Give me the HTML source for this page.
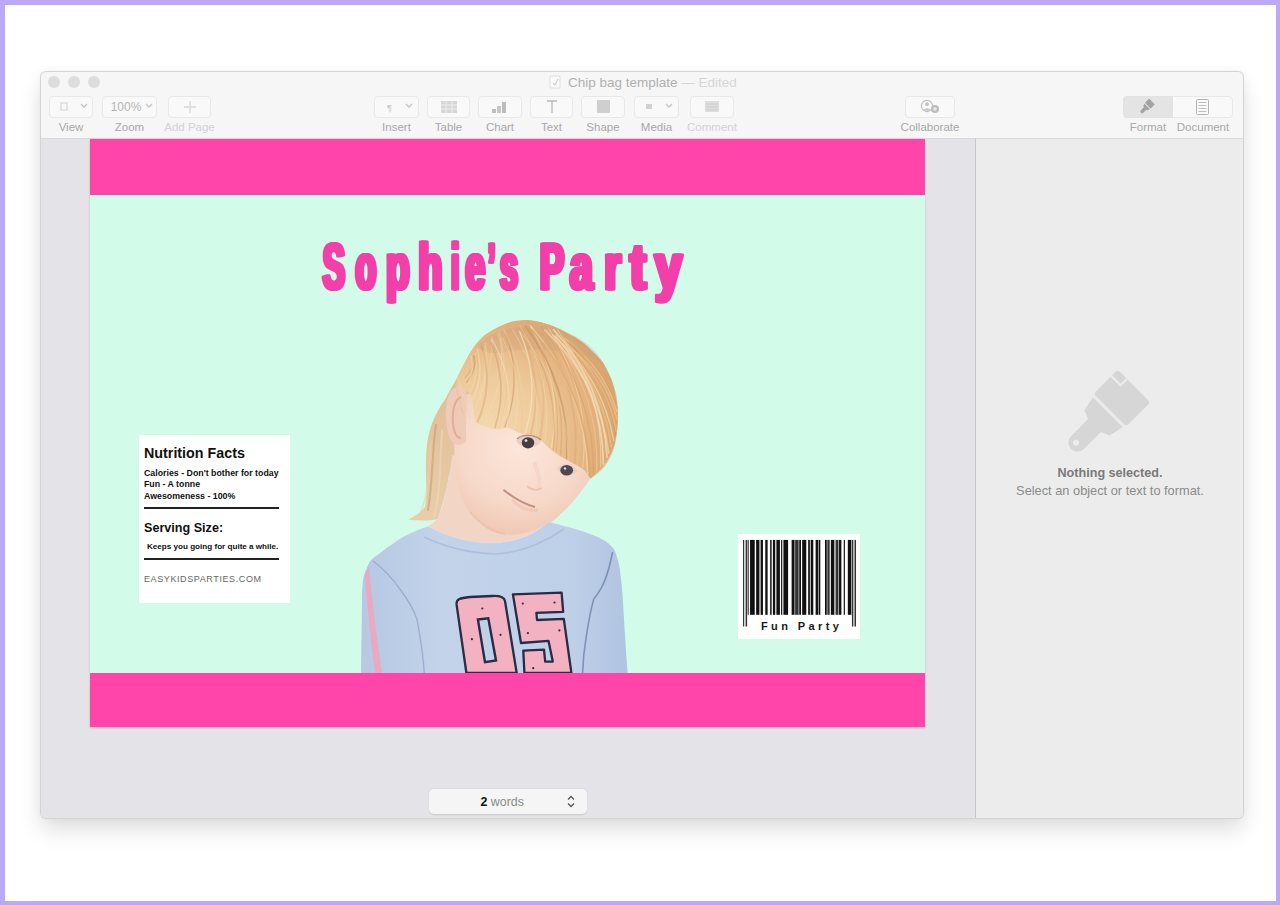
<!DOCTYPE html>
<html><head><meta charset="utf-8">
<style>
*{margin:0;padding:0;box-sizing:border-box}
html,body{width:1280px;height:905px;overflow:hidden;background:#fff;font-family:"Liberation Sans",sans-serif}
.a{position:absolute}
#frame{left:0;top:0;width:1280px;height:905px;border-style:solid;border-color:#BBA8F6;border-width:5px 4px 4px 5px;background:#fff}
#win{left:41px;top:72px;width:1202px;height:746px;border-radius:5px;background:#F6F6F6;box-shadow:0 0 0 1px #d4d4d4,0 12px 22px rgba(0,0,0,.13),0 0 10px rgba(0,0,0,.05);overflow:hidden}
.tl{top:76px;width:12px;height:12px;border-radius:50%;background:#dddddd}
.btn{top:96px;height:22px;border:1px solid #e8e8e8;border-radius:4px;background:#f9f9f9}
.lbl{top:120px;font-size:11.5px;line-height:14px;color:#a8a8a8;text-align:center;white-space:nowrap}
#canvas{left:41px;top:138px;width:934px;height:680px;border-radius:0 0 0 5px;background:#E3E3E8;border-top:1px solid #dadada}
#side{left:975px;top:138px;width:268px;height:680px;border-radius:0 0 5px 0;background:#ECECEC;border-left:1px solid #c8c8c8;border-top:1px solid #dadada}
#page{left:90px;top:139px;width:835px;height:588px;background:#D3FBE9;box-shadow:0 1px 2px rgba(0,0,0,.18)}
.band{left:90px;width:835px;background:#FF45A9}
.nf{color:#111;font-weight:bold;white-space:nowrap}
</style></head><body>
<div id="frame" class="a"></div>
<div id="win" class="a"></div>
<!-- traffic lights -->
<div class="a tl" style="left:48px"></div>
<div class="a tl" style="left:68px"></div>
<div class="a tl" style="left:88px"></div>
<!-- title -->
<svg class="a" style="left:549px;top:75px" width="13" height="14" viewBox="0 0 13 14"><rect x="1" y="1" width="10" height="12" rx="1" fill="#fafafa" stroke="#dedede"/><path d="M4 8 L6 10 L9 4" stroke="#cfcfcf" stroke-width="1.2" fill="none"/></svg>
<div class="a" style="left:568px;top:75px;font-size:13.5px;line-height:16px;color:#b0b0b0;white-space:nowrap">Chip bag template <span style="color:#d6d6d6">— Edited</span></div>

<!-- toolbar buttons -->
<div class="a btn" style="left:49px;width:44px"></div>
<div class="a btn" style="left:102px;width:55px"></div>
<div class="a btn" style="left:168px;width:43px"></div>
<div class="a lbl" style="left:49px;width:44px">View</div>
<div class="a lbl" style="left:102px;width:55px">Zoom</div>
<div class="a lbl" style="left:158px;width:63px;color:#d2d2d2">Add Page</div>

<div class="a btn" style="left:374px;width:45px"></div>
<div class="a btn" style="left:427px;width:43px"></div>
<div class="a btn" style="left:478px;width:44px"></div>
<div class="a btn" style="left:530px;width:43px"></div>
<div class="a btn" style="left:581px;width:44px"></div>
<div class="a btn" style="left:634px;width:45px"></div>
<div class="a btn" style="left:690px;width:44px"></div>
<div class="a lbl" style="left:374px;width:45px">Insert</div>
<div class="a lbl" style="left:427px;width:43px">Table</div>
<div class="a lbl" style="left:478px;width:44px">Chart</div>
<div class="a lbl" style="left:530px;width:43px">Text</div>
<div class="a lbl" style="left:581px;width:44px">Shape</div>
<div class="a lbl" style="left:634px;width:45px">Media</div>
<div class="a lbl" style="left:680px;width:64px;color:#d2d2d2">Comment</div>

<div class="a btn" style="left:905px;width:50px"></div>
<div class="a lbl" style="left:890px;width:80px">Collaborate</div>

<div class="a btn" style="left:1123px;width:110px"></div>
<div class="a btn" style="left:1123px;width:50px;background:#e4e4e4;border-color:#e2e2e2;border-radius:4px 0 0 4px"></div>
<div class="a lbl" style="left:1123px;width:50px">Format</div>
<div class="a lbl" style="left:1173px;width:60px">Document</div>

<!-- toolbar icons -->
<svg class="a" style="left:0;top:0" width="1280" height="140" viewBox="0 0 1280 140">
  <g fill="none" stroke="#c4c4c4" stroke-width="1.3">
    <path d="M81 104 l3 3 l3 -3"/><path d="M146 104 l3 3 l3 -3"/>
    <path d="M406 104 l3 3 l3 -3"/><path d="M666 104 l3 3 l3 -3"/>
    <path d="M190 101 v12 M184 107 h12" stroke="#d8d8d8"/>
    <path d="M547 101 h10 M552 101 v12" stroke="#b8b8b8"/>
  </g>
  <rect x="61" y="103" width="6" height="7" fill="none" stroke="#cfcfcf"/>
  <text x="126" y="111" font-size="12" fill="#b5b5b5" text-anchor="middle" font-family="Liberation Sans">100%</text>
  <text x="387" y="111" font-size="9" fill="#c0c0c0" font-family="Liberation Sans">¶</text>
  <rect x="441" y="101" width="16" height="12" fill="#d6d6d6"/>
  <path d="M441 105 h16 M441 109 h16 M446 101 v12 M452 101 v12" stroke="#eeeeee" stroke-width="1"/>
  <rect x="492" y="109" width="4" height="4" fill="#bdbdbd"/><rect x="497" y="106" width="4" height="7" fill="#c6c6c6"/><rect x="502" y="102" width="4" height="11" fill="#bdbdbd"/>
  <rect x="597" y="100" width="13" height="13" fill="#cfcfcf"/>
  <rect x="646" y="104" width="6" height="5" fill="#d2d2d2"/>
  <rect x="705" y="101" width="14" height="11" fill="#dedede"/><path d="M706 104 h12 M706 107 h12 M706 110 h12" stroke="#cccccc"/>
  <circle cx="927" cy="106" r="5.6" fill="none" stroke="#bdbdbd" stroke-width="1.1"/><circle cx="927" cy="104.2" r="1.9" fill="#c2c2c2"/><path d="M923.8 110.5 C924 107.5 930 107.5 930.2 110.5 Z" fill="#c2c2c2"/>
  <circle cx="935" cy="109" r="4" fill="#bdbdbd"/><path d="M935 107 v4 M933 109 h4" stroke="#f5f5f5" stroke-width="1"/>
  <g transform="translate(1152,101.5) rotate(45) scale(0.175)" fill="#a3a3a3">
    <path d="M-23 3 Q-23 0 -20 0 L20 0 Q23 0 23 3 L23 31 Q23 34 20 34 L-20 34 Q-23 34 -23 31 Z"/>
    <path d="M-21 40 L21 40 L18 52 L10 56 L10 80 A10 10 0 0 1 -10 80 L-10 56 L-18 52 Z"/>
  </g>
  <rect x="1196.5" y="99.5" width="12" height="15" rx="1" fill="none" stroke="#b3b3b3" stroke-width="1"/>
  <path d="M1198.5 102.5 h8 M1198.5 105.5 h8 M1198.5 108.5 h8 M1198.5 111.5 h8" stroke="#c0c0c0" stroke-width="1"/>
</svg>

<div id="canvas" class="a"></div>
<div id="side" class="a"></div>
<div id="page" class="a"></div>
<div class="a band" style="top:139px;height:56px"></div>
<div class="a band" style="top:673px;height:54px"></div>

<!-- title text -->
<svg class="a" style="left:0;top:200px" width="1280" height="120" viewBox="0 200 1280 120"><g font-family="Liberation Sans" font-weight="bold" font-size="64.5" fill="#F23FA9" stroke="#F23FA9" stroke-width="3" stroke-linejoin="round"><text transform="translate(321.47,0) scale(0.511,1)" x="0" y="289">S</text><text transform="translate(322.87,0) scale(0.511,1)" x="0" y="289">S</text><text transform="translate(324.27,0) scale(0.511,1)" x="0" y="289">S</text><text transform="translate(354.37,0) scale(0.514,1)" x="0" y="289">o</text><text transform="translate(355.77,0) scale(0.514,1)" x="0" y="289">o</text><text transform="translate(357.17,0) scale(0.514,1)" x="0" y="289">o</text><text transform="translate(384.79,0) scale(0.592,1)" x="0" y="289">p</text><text transform="translate(386.19,0) scale(0.592,1)" x="0" y="289">p</text><text transform="translate(387.59,0) scale(0.592,1)" x="0" y="289">p</text><text transform="translate(416.91,0) scale(0.608,1)" x="0" y="289">h</text><text transform="translate(418.31,0) scale(0.608,1)" x="0" y="289">h</text><text transform="translate(419.71,0) scale(0.608,1)" x="0" y="289">h</text><text transform="translate(450.12,0) scale(0.416,1)" x="0" y="289">i</text><text transform="translate(451.52,0) scale(0.416,1)" x="0" y="289">i</text><text transform="translate(452.92,0) scale(0.416,1)" x="0" y="289">i</text><text transform="translate(464.31,0) scale(0.540,1)" x="0" y="289">e</text><text transform="translate(465.71,0) scale(0.540,1)" x="0" y="289">e</text><text transform="translate(467.11,0) scale(0.540,1)" x="0" y="289">e</text><text transform="translate(487.05,0) scale(0.368,1)" x="0" y="289">’</text><text transform="translate(488.45,0) scale(0.368,1)" x="0" y="289">’</text><text transform="translate(489.85,0) scale(0.368,1)" x="0" y="289">’</text><text transform="translate(498.74,0) scale(0.494,1)" x="0" y="289">s</text><text transform="translate(500.14,0) scale(0.494,1)" x="0" y="289">s</text><text transform="translate(501.54,0) scale(0.494,1)" x="0" y="289">s</text><text transform="translate(538.44,0) scale(0.561,1)" x="0" y="289">P</text><text transform="translate(539.84,0) scale(0.561,1)" x="0" y="289">P</text><text transform="translate(541.24,0) scale(0.561,1)" x="0" y="289">P</text><text transform="translate(568.46,0) scale(0.639,1)" x="0" y="289">a</text><text transform="translate(569.86,0) scale(0.639,1)" x="0" y="289">a</text><text transform="translate(571.26,0) scale(0.639,1)" x="0" y="289">a</text><text transform="translate(602.99,0) scale(0.658,1)" x="0" y="289">r</text><text transform="translate(604.39,0) scale(0.658,1)" x="0" y="289">r</text><text transform="translate(605.79,0) scale(0.658,1)" x="0" y="289">r</text><text transform="translate(628.43,0) scale(0.751,1)" x="0" y="289">t</text><text transform="translate(629.83,0) scale(0.751,1)" x="0" y="289">t</text><text transform="translate(631.23,0) scale(0.751,1)" x="0" y="289">t</text><text transform="translate(653.62,0) scale(0.748,1)" x="0" y="289">y</text><text transform="translate(655.02,0) scale(0.748,1)" x="0" y="289">y</text><text transform="translate(656.42,0) scale(0.748,1)" x="0" y="289">y</text></g></svg>

<!-- photo -->
<svg class="a" style="left:0;top:0" width="1280" height="673" viewBox="0 0 1280 673">
  <defs>
    <radialGradient id="skin" cx="0.45" cy="0.4" r="0.7">
      <stop offset="0" stop-color="#FCE6DA"/><stop offset="0.55" stop-color="#F7D9CA"/><stop offset="0.9" stop-color="#EFC6B2"/><stop offset="1" stop-color="#E8B9A3"/>
    </radialGradient>
    <linearGradient id="backhair" x1="0" y1="0" x2="0" y2="1">
      <stop offset="0" stop-color="#DCB68F"/><stop offset="1" stop-color="#E9CDA9"/>
    </linearGradient>
    <radialGradient id="bangg" cx="490" cy="430" r="150" gradientUnits="userSpaceOnUse">
      <stop offset="0" stop-color="#F4D9B0"/><stop offset="0.35" stop-color="#EECB9C"/><stop offset="0.62" stop-color="#E5B683"/><stop offset="0.85" stop-color="#D9A570"/><stop offset="1" stop-color="#CDA07C"/>
    </radialGradient>
    <linearGradient id="shirtg" x1="0" y1="0" x2="1" y2="0">
      <stop offset="0" stop-color="#B6C8E2"/><stop offset="0.3" stop-color="#C2D3EA"/><stop offset="0.8" stop-color="#BED0E8"/><stop offset="1" stop-color="#B0C3E0"/>
    </linearGradient>
  </defs>
  <!-- hair mass behind -->
  <path d="M527 320 C556 322 586 343 603 362 C612 378 617 392 617.5 404 C619 425 617 445 610 458 C605 468 598 474 590.6 478.5 L470 480 L449 475 C447 490 442 505 438 519 C430 521 418 521 408 519.5 C416 516 421 512 425 507 C428 495 424.5 475 426.5 450 C428 428 436 412 446 398 C450 390 454 383 456 380 C462 368 468 355 476 344 C486 333 500 323 527 320 Z" fill="url(#backhair)"/>
  <g fill="none" stroke-linecap="round">
    <path d="M436 425 C432 450 433 480 428 510" stroke="#C99D72" stroke-width="2" opacity="0.6"/>
    <path d="M442 430 C440 460 441 490 434 517" stroke="#EED6B6" stroke-width="2" opacity="0.7"/>
    <path d="M431 440 C428 470 430 495 418 518" stroke="#E9CFAE" stroke-width="1.5" opacity="0.6"/>
  </g>
  <!-- neck -->
  <path d="M438 519 C444 502 449 482 452 455 L530 480 L560 515 C545 530 520 542 490 543 C468 543 446 536 428 526.4 Z" fill="#F3D5C6"/>
  <!-- shirt -->
  <path d="M361 673 L362 601 C362 585 363 576 366 570 C369 562 372 558 377 555.6 C383 551 387 547 391.5 544.7 C398 540 404 536 409.7 533.7 C415 531 420 529 428 526.4 C446 536 468 543 490 543 C518 543 538 532 548.8 521.9 C558 524 568 527 577 529.4 C588 533 597 536 605 540.7 C610 544 612 547 614.5 550 C617 556 619 563 620 570.7 C622 585 623 600 623.9 617.6 C625 635 626 652 627.6 673 Z" fill="url(#shirtg)"/>
  <!-- collar seam -->
  <path d="M424 537 C445 547 470 553 495 554 C520 553 545 542 564 529" stroke="#ADBFDC" stroke-width="1.6" fill="none"/>
  <!-- arm creases -->
  <path d="M373 561 C385 570 395 582 400.6 590 C408 600 414 610 417 619.4 C420 635 423 655 424.3 673" stroke="#93A6C8" stroke-width="1.4" fill="none" opacity="0.8"/>
  <path d="M612.6 552 C610 565 607 575 605 580 C601 590 597 595 593.8 598.9 C590 612 588 625 586.3 636.4 C584 650 583 660 582.6 673" stroke="#6F82A8" stroke-width="1.6" fill="none" opacity="0.8"/>
  <!-- pink stripe -->
  <path d="M365 575 L369 566 C372 600 377 640 382 673 L375 673 C371 640 367 608 365 575 Z" fill="#E9A9C0"/>
  <!-- number 0 -->
  <path d="M456.6 604.7 C456 599 460 598 470 597 L492 596 C500 595.5 504 597 505 601 L516.7 673 L466.4 673 Z" fill="#F2B2C2" stroke="#2A2B45" stroke-width="2.3"/>
  <path d="M477.9 619.5 L488.3 618.4 L496 660.5 L485 662.1 Z" fill="#BFD1E9" stroke="#2A2B45" stroke-width="2.4"/>
  <!-- number 5 -->
  <path d="M512.9 594.3 L561.6 592.7 L563.2 611.8 L536.4 612.9 L537 620 L563.8 618.9 L571.4 673 L524.4 673 L523.3 650.6 L544 649.6 L545.2 661.6 L552.8 661.6 L548.5 640.8 L521 643 Z" fill="#F2B2C2" stroke="#2A2B45" stroke-width="2.3" stroke-linejoin="round"/>
  <g fill="#3A2A35"><circle cx="482.3" cy="608.5" r="1.1"/><circle cx="471.9" cy="639.2" r="1.1"/><circle cx="500.5" cy="634.8" r="1.1"/><circle cx="522.8" cy="603.6" r="1.1"/><circle cx="554.5" cy="602.5" r="1.1"/><circle cx="527.9" cy="633.1" r="1.1"/><circle cx="559.4" cy="630.4" r="1.1"/><circle cx="533.2" cy="668.2" r="1.1"/></g>
  <!-- face -->
  <path d="M452 400 C475 388 520 385 560 395 C595 410 612 440 600 462 L590.6 478.5 C582 490 574 502 563 512 C552 522 540 529 525 533 C515 535 508 535 502.8 534.3 C494 532 490 530 486.2 527.6 C478 521 473 517 469.6 512.7 C465 505 461 498 459.7 491.2 C457 480 455 470 454.7 460 C454.5 450 454 440 452 400 Z" fill="url(#skin)"/>
  <path d="M470 512 C480 524 492 532 505 534" stroke="#E6BCA8" stroke-width="2" fill="none" opacity="0.5"/>
  
  <!-- ear -->
  <path d="M466 386 C458 383 450 388 447 400 C444 414 446 432 452 442 C456 446 462 445 466 442 C466 425 467 405 466 386 Z" fill="#EFCBB7"/>
  <path d="M461 397 C454 400 452 412 453 424 C454 433 457 438 461 438" stroke="#DFAE96" stroke-width="2" fill="none"/>
  <!-- hair top + bangs -->
  <path d="M471 394 C473 405 474 415 475.3 422.2 C478 424 481 425.5 485 426.4 C490 428 493 429.5 496.4 429.2 C501 429 505 427.5 509 427.8 C513 429 516 432 520.3 433.4 C525 435 530 435 534.4 436.3 C539 438 542 441.5 545.6 444.7 C549 448 552 450.5 555.5 453.1 C560 456.5 565 459 569.5 461.6 C574 464 578 466 582.2 468.6 C585.5 471 588 475 590.6 478.5 C596 474 601 469 604.7 464.4 C611 455 615 446 616 436.3 C618 426 618 416 617.4 408.1 C616 398 614.5 389 611.7 380 C608 372 605 366 601.9 361.6 C592 350 582 340 570.6 335 C558 327 545 322 527 320 C518 320 512 321 505 324 C497 327 491 331 484.7 335 C479 340 474 346 470.6 352 C467 358 464 364 461.25 369.4 C459 374 457 380 456 385 C461 388 466 391 471 394 Z" fill="url(#bangg)"/>
  <g fill="none" stroke-linecap="round">
    <path d="M476 346 C495 326 540 318 575 336 C590 345 598 352 602 362 C580 352 540 345 505 352 C492 355 482 352 476 346 Z" fill="#C69F80" opacity="0.28" stroke="none"/>
    <path d="M475.1 358.0 Q471.7 368.1 462.7 372.3" stroke="#EDC591" stroke-width="1.7" opacity="0.44"/>
    <path d="M473.6 355.2 Q473.7 368.9 465.1 378.0" stroke="#CD945F" stroke-width="1.1" opacity="0.39"/>
    <path d="M475.1 355.9 Q476.0 371.4 466.9 382.4" stroke="#CD945F" stroke-width="1.5" opacity="0.63"/>
    <path d="M471.2 356.5 Q474.6 371.7 467.6 384.2" stroke="#F2D4A6" stroke-width="1.8" opacity="0.62"/>
    <path d="M475.1 353.4 Q479.8 373.8 470.4 391.0" stroke="#F2D4A6" stroke-width="1.5" opacity="0.57"/>
    <path d="M476.6 355.9 Q481.3 377.2 471.4 395.0" stroke="#E3B37E" stroke-width="0.8" opacity="0.46"/>
    <path d="M477.5 349.7 Q484.2 376.6 472.2 400.1" stroke="#F5DCB3" stroke-width="1.2" opacity="0.73"/>
    <path d="M491.6 336.9 Q494.3 374.2 472.6 403.2" stroke="#F2D4A6" stroke-width="1.8" opacity="0.37"/>
    <path d="M485.4 343.4 Q491.2 378.5 473.3 407.8" stroke="#F2D4A6" stroke-width="1.6" opacity="0.47"/>
    <path d="M483.5 350.9 Q489.8 383.5 473.9 411.2" stroke="#F5DCB3" stroke-width="0.9" opacity="0.67"/>
    <path d="M484.0 346.3 Q492.0 383.4 474.5 415.6" stroke="#F2D4A6" stroke-width="1.2" opacity="0.44"/>
    <path d="M481.8 345.5 Q493.7 385.1 477.7 421.7" stroke="#CD945F" stroke-width="1.9" opacity="0.35"/>
    <path d="M500.4 339.3 Q506.9 385.5 482.5 423.8" stroke="#F5DCB3" stroke-width="1.0" opacity="0.53"/>
    <path d="M492.0 342.2 Q504.7 385.5 486.9 425.4" stroke="#F2D4A6" stroke-width="1.2" opacity="0.35"/>
    <path d="M499.2 331.9 Q512.1 381.4 490.5 426.2" stroke="#F2D4A6" stroke-width="1.4" opacity="0.46"/>
    <path d="M491.4 343.4 Q508.6 385.5 495.0 427.4" stroke="#CD945F" stroke-width="1.7" opacity="0.41"/>
    <path d="M497.6 333.7 Q515.3 381.1 498.7 427.4" stroke="#EDC591" stroke-width="1.0" opacity="0.44"/>
    <path d="M506.5 335.2 Q522.5 382.0 504.9 426.8" stroke="#CD945F" stroke-width="1.4" opacity="0.54"/>
    <path d="M491.8 339.1 Q515.4 380.8 506.9 426.5" stroke="#F7E2BE" stroke-width="1.2" opacity="0.54"/>
    <path d="M502.3 337.5 Q525.0 381.8 514.4 429.0" stroke="#F5DCB3" stroke-width="0.9" opacity="0.57"/>
    <path d="M503.8 329.6 Q529.2 378.4 517.6 430.6" stroke="#F2D4A6" stroke-width="1.6" opacity="0.38"/>
    <path d="M497.0 333.7 Q527.0 379.3 521.0 432.0" stroke="#EDC591" stroke-width="1.4" opacity="0.41"/>
    <path d="M519.6 331.3 Q541.0 381.8 525.4 432.9" stroke="#F7E2BE" stroke-width="1.3" opacity="0.78"/>
    <path d="M519.8 328.3 Q544.7 380.0 530.9 434.1" stroke="#D9A26B" stroke-width="1.9" opacity="0.36"/>
    <path d="M512.7 329.6 Q543.4 379.2 535.5 435.6" stroke="#F5DCB3" stroke-width="0.8" opacity="0.60"/>
    <path d="M525.2 330.4 Q552.2 382.7 539.6 438.7" stroke="#E3B37E" stroke-width="1.9" opacity="0.50"/>
    <path d="M511.6 333.4 Q545.8 382.1 541.2 439.9" stroke="#E3B37E" stroke-width="0.7" opacity="0.57"/>
    <path d="M520.0 325.4 Q553.7 380.3 544.7 442.5" stroke="#F5DCB3" stroke-width="0.8" opacity="0.64"/>
    <path d="M531.3 327.4 Q563.4 384.9 551.5 448.2" stroke="#F7E2BE" stroke-width="1.5" opacity="0.56"/>
    <path d="M522.8 329.1 Q560.1 384.7 553.4 449.8" stroke="#D9A26B" stroke-width="1.4" opacity="0.57"/>
    <path d="M528.2 328.9 Q564.7 386.2 556.3 452.1" stroke="#CD945F" stroke-width="1.0" opacity="0.36"/>
    <path d="M528.1 325.7 Q567.8 385.1 560.6 454.7" stroke="#D9A26B" stroke-width="1.5" opacity="0.55"/>
    <path d="M525.4 326.2 Q570.1 385.6 566.7 458.4" stroke="#CD945F" stroke-width="1.7" opacity="0.69"/>
    <path d="M520.7 332.4 Q567.6 388.1 568.2 459.3" stroke="#F2D4A6" stroke-width="0.9" opacity="0.57"/>
    <path d="M542.5 333.7 Q582.1 393.3 574.7 463.0" stroke="#D9A26B" stroke-width="1.7" opacity="0.40"/>
    <path d="M546.5 329.7 Q586.5 392.3 577.5 464.5" stroke="#EDC591" stroke-width="1.3" opacity="0.49"/>
    <path d="M548.4 327.9 Q591.0 392.4 582.8 467.8" stroke="#F5DCB3" stroke-width="1.0" opacity="0.62"/>
    <path d="M532.3 330.0 Q584.4 391.6 585.4 470.8" stroke="#EDC591" stroke-width="0.7" opacity="0.41"/>
    <path d="M530.5 326.0 Q586.0 390.3 587.8 473.7" stroke="#F2D4A6" stroke-width="1.7" opacity="0.79"/>
    <path d="M532.2 329.8 Q587.7 393.3 589.9 476.2" stroke="#D9A26B" stroke-width="1.9" opacity="0.66"/>
    <path d="M541.3 326.5 Q594.2 391.7 593.4 474.2" stroke="#CD945F" stroke-width="1.3" opacity="0.37"/>
    <path d="M553.1 335.6 Q599.6 396.0 596.8 470.8" stroke="#EDC591" stroke-width="1.4" opacity="0.69"/>
    <path d="M557.6 330.1 Q604.1 391.5 600.7 466.9" stroke="#F7E2BE" stroke-width="1.2" opacity="0.55"/>
    <path d="M555.8 335.8 Q603.0 392.2 603.4 464.2" stroke="#F7E2BE" stroke-width="1.8" opacity="0.71"/>
    <path d="M553.5 329.6 Q603.5 384.6 607.0 457.3" stroke="#F7E2BE" stroke-width="1.7" opacity="0.71"/>
    <path d="M544.7 330.1 Q599.1 380.8 608.7 453.0" stroke="#F5DCB3" stroke-width="1.9" opacity="0.59"/>
    <path d="M555.4 334.9 Q603.6 382.9 610.2 449.2" stroke="#D9A26B" stroke-width="1.3" opacity="0.37"/>
    <path d="M554.8 337.3 Q603.0 382.5 611.3 446.6" stroke="#F2D4A6" stroke-width="1.7" opacity="0.38"/>
    <path d="M552.4 334.6 Q602.4 377.2 613.7 440.4" stroke="#F2D4A6" stroke-width="1.3" opacity="0.80"/>
    <path d="M563.8 337.3 Q607.7 377.9 615.7 435.6" stroke="#CD945F" stroke-width="1.4" opacity="0.66"/>
    <path d="M563.0 340.4 Q606.3 377.2 616.2 431.6" stroke="#EDC591" stroke-width="1.5" opacity="0.59"/>
    <path d="M566.0 339.4 Q607.2 374.7 616.4 426.5" stroke="#E3B37E" stroke-width="1.7" opacity="0.62"/>
    <path d="M559.3 333.8 Q604.5 369.4 616.5 424.1" stroke="#CD945F" stroke-width="0.9" opacity="0.59"/>
    <path d="M568.4 346.5 Q605.8 374.6 616.8 418.6" stroke="#EDC591" stroke-width="1.8" opacity="0.59"/>
    <path d="M560.9 335.5 Q603.0 364.3 617.1 411.8" stroke="#EDC591" stroke-width="1.3" opacity="0.76"/>
    <path d="M569.4 342.6 Q605.4 367.4 617.3 407.9" stroke="#D9A26B" stroke-width="1.2" opacity="0.72"/>
    <path d="M458 378 C462 392 466 405 470 418" stroke="#EFD3AD" stroke-width="1.5" opacity="0.7"/>
    <path d="M455 384 C458 395 461 405 463 414" stroke="#E5C197" stroke-width="1.2" opacity="0.6"/>
  </g>
  <!-- eyes -->
  <path d="M516 441 C521 433 535 433 541 442 C536 449 522 450 516 441 Z" fill="#E9CFC6"/>
  <ellipse cx="528" cy="442.8" rx="6.3" ry="5.6" fill="#4A3D42"/><path d="M517 439 C522 434 534 434 541 440" stroke="#9A6E60" stroke-width="1.3" fill="none" opacity="0.7"/>
  <circle cx="526" cy="440.6" r="1.4" fill="#EDE4E2"/>
  <path d="M557 468 C562 462 573 463 578 471 C573 477 562 477 557 468 Z" fill="#E9CFC6"/>
  <ellipse cx="566.7" cy="470.2" rx="6.4" ry="5.2" fill="#4F4A52"/><circle cx="565" cy="468.5" r="1.2" fill="#E6DCDC"/>
  <!-- nose shading -->
  <path d="M534 462 C538 472 541 481 538 488" stroke="#EFCDBD" stroke-width="4" fill="none" opacity="0.45"/>
  <path d="M527 486 C531 490 537 491 542 488" stroke="#E2B09C" stroke-width="2" fill="none" opacity="0.6"/>
  <!-- mouth -->
  <path d="M503.4 489.7 C510 495 520 503 535 507" stroke="#C98E82" stroke-width="2" fill="none"/>
  <path d="M512 500 C520 508 530 511 538 510" stroke="#EDB9AC" stroke-width="3" fill="none" opacity="0.5"/>
</svg>

<!-- nutrition box -->
<div class="a" style="left:139px;top:435px;width:151px;height:168px;background:#fff"></div>
<div class="a nf" style="left:144px;top:445px;font-size:14.3px;line-height:17px">Nutrition Facts</div>
<div class="a nf" style="left:144px;top:467.5px;font-size:8.8px;line-height:11.7px">Calories - Don't bother for today<br>Fun - A tonne<br>Awesomeness - 100%</div>
<div class="a" style="left:144px;top:507px;width:135px;height:2px;background:#222"></div>
<div class="a nf" style="left:144px;top:520px;font-size:12.6px;line-height:16px">Serving Size:</div>
<div class="a nf" style="left:147px;top:542px;font-size:8.1px;line-height:10px">Keeps you going for quite a while.</div>
<div class="a" style="left:144px;top:558px;width:135px;height:2px;background:#222"></div>
<div class="a" style="left:144px;top:574px;font-size:9px;line-height:11px;letter-spacing:0.6px;color:#666;white-space:nowrap">EASYKIDSPARTIES.COM</div>

<!-- barcode -->
<div class="a" style="left:738px;top:534px;width:122px;height:105px;background:#fff"></div>
<svg class="a" style="left:0;top:0" width="1280" height="905" viewBox="0 0 1280 905">
<g><rect x="743.03" y="539.9" width="1.17" height="86.6" fill="#333"/><rect x="745.60" y="539.9" width="1.52" height="86.6" fill="#333"/><rect x="747.71" y="539.9" width="0.94" height="74.9" fill="#111"/><rect x="750.05" y="539.9" width="4.68" height="74.9" fill="#111"/><rect x="756.14" y="539.9" width="3.28" height="74.9" fill="#111"/><rect x="760.59" y="539.9" width="2.34" height="74.9" fill="#111"/><rect x="765.27" y="539.9" width="2.34" height="74.9" fill="#111"/><rect x="769.96" y="539.9" width="1.76" height="74.9" fill="#333"/><rect x="772.89" y="539.9" width="2.34" height="74.9" fill="#111"/><rect x="776.40" y="539.9" width="3.51" height="74.9" fill="#111"/><rect x="781.08" y="539.9" width="1.17" height="74.9" fill="#111"/><rect x="783.42" y="539.9" width="4.68" height="74.9" fill="#111"/><rect x="791.62" y="539.9" width="2.93" height="74.9" fill="#111"/><rect x="795.13" y="539.9" width="3.51" height="74.9" fill="#333"/><rect x="799.23" y="539.9" width="1.76" height="74.9" fill="#111"/><rect x="802.16" y="539.9" width="4.10" height="74.9" fill="#111"/><rect x="808.01" y="539.9" width="2.34" height="74.9" fill="#333"/><rect x="810.94" y="539.9" width="2.34" height="74.9" fill="#111"/><rect x="815.63" y="539.9" width="2.34" height="74.9" fill="#111"/><rect x="818.55" y="539.9" width="1.76" height="74.9" fill="#111"/><rect x="824.99" y="539.9" width="1.76" height="74.9" fill="#111"/><rect x="827.33" y="539.9" width="2.34" height="74.9" fill="#333"/><rect x="830.85" y="539.9" width="3.51" height="74.9" fill="#111"/><rect x="835.53" y="539.9" width="2.93" height="74.9" fill="#333"/><rect x="839.04" y="539.9" width="2.34" height="74.9" fill="#111"/><rect x="843.73" y="539.9" width="1.17" height="74.9" fill="#111"/><rect x="847.83" y="539.9" width="3.51" height="74.9" fill="#111"/><rect x="851.93" y="539.9" width="1.41" height="86.6" fill="#333"/><rect x="854.50" y="539.9" width="1.52" height="86.6" fill="#333"/></g>
</svg>
<div class="a" style="left:761px;top:619.5px;font-size:11px;line-height:13px;font-weight:bold;letter-spacing:3.4px;color:#1a1a1a;white-space:nowrap">Fun Party</div>

<!-- sidebar -->
<svg class="a" style="left:0;top:0" width="1280" height="905" viewBox="0 0 1280 905">
  <g transform="translate(1134,386) rotate(45)" fill="#D6D6D6">
    <path d="M-23 3 Q-23 0 -20 0 L20 0 Q23 0 23 3 L23 31 Q23 34 20 34 L-20 34 Q-23 34 -23 31 Z"/>
    <path d="M-21 37 L21 37 L18 52 L9 56 L9 80 A9 9 0 0 1 -9 80 L-9 56 L-18 52 Z"/>
    <circle cx="-1" cy="81" r="3" fill="#ECECEC"/>
    <path d="M-23 9 L-10 9 L-10 -1" stroke="#ECECEC" stroke-width="2.2" fill="none"/>
  </g>
</svg>
<div class="a" style="left:976px;top:465.5px;width:268px;text-align:center;font-size:12.6px;line-height:15px;font-weight:bold;color:#7a7a7a">Nothing selected.</div>
<div class="a" style="left:976px;top:482.5px;width:268px;text-align:center;font-size:12.8px;line-height:16px;color:#8a8a8a">Select an object or text to format.</div>

<!-- word count -->
<div class="a" style="left:429px;top:789px;width:158px;height:25px;border-radius:5px;background:#F5F5F5;box-shadow:0 0.5px 1.5px rgba(0,0,0,.12)"></div>
<div class="a" style="left:480.5px;top:795px;font-size:12.4px;line-height:15px;color:#8a8a8a;white-space:nowrap"><b style="color:#111">2</b> words</div>
<svg class="a" style="left:566px;top:795px" width="10" height="13" viewBox="0 0 10 13"><path d="M2 4.5 L5 1.5 L8 4.5 M2 8.5 L5 11.5 L8 8.5" stroke="#555" stroke-width="1.3" fill="none"/></svg>
</body></html>
